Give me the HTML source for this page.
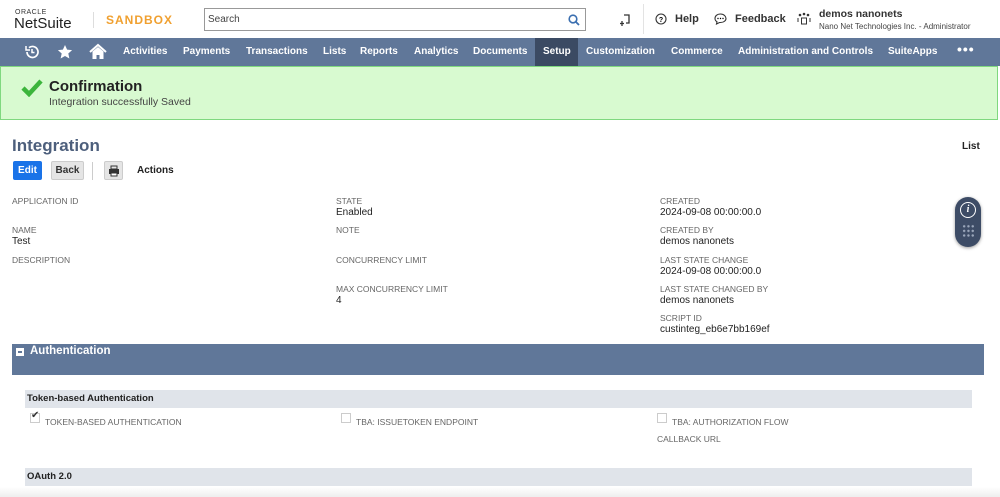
<!DOCTYPE html>
<html><head><style>
*{margin:0;padding:0;box-sizing:border-box}
body{width:1000px;height:497px;overflow:hidden;background:#fff;font-family:"Liberation Sans",sans-serif;color:#333;position:relative}
.a{position:absolute;white-space:nowrap}
.nav{position:absolute;left:0;top:38px;width:1000px;height:28px;background:#607799}
.nav .a{color:#fff;font-size:10px;top:8px;font-weight:bold}
.lbl{font-size:8.5px;color:#666;position:absolute;white-space:nowrap}
.val{font-size:10px;color:#222;position:absolute;white-space:nowrap}
.cb{position:absolute;width:10px;height:10px;border:1px solid #ccc;background:#fff}
</style></head><body>
<div class="a" style="left:15px;top:9px;font-size:7px;letter-spacing:0.5px;color:#333">ORACLE</div>
<div class="a" style="left:14px;top:15px;font-size:15px;color:#222">NetSuite</div>
<div class="a" style="left:93px;top:12px;width:1px;height:16px;background:#ddd"></div>
<div class="a" style="left:106px;top:13px;font-size:12px;font-weight:bold;color:#f0a030;letter-spacing:1px">SANDBOX</div>
<div class="a" style="left:204px;top:8px;width:382px;height:23px;border:1px solid #999;background:#fff"><span style="position:absolute;left:3px;top:5px;font-size:10px;color:#444">Search</span>
<svg style="position:absolute;right:5px;top:5px" width="12" height="12" viewBox="0 0 12 12"><circle cx="5" cy="5" r="3.8" fill="none" stroke="#3b6fb0" stroke-width="1.6"/><path d="M8 8l3 3" stroke="#3b6fb0" stroke-width="1.8"/></svg></div>
<svg class="a" style="left:620px;top:12px" width="13" height="14" viewBox="0 0 13 14"><path d="M4 3h5v8H6M2 9v5M0 11.5h4" stroke="#333" stroke-width="1.3" fill="none"/></svg>
<div class="a" style="left:643px;top:4px;width:1px;height:30px;background:#e3e3e3"></div>
<svg class="a" style="left:655px;top:13px" width="12" height="12"><circle cx="6" cy="6" r="5" fill="none" stroke="#333" stroke-width="1.1"/><text x="6" y="9" font-size="7" text-anchor="middle" font-family="Liberation Sans" font-weight="bold">?</text></svg>
<div class="a" style="left:675px;top:13px;font-size:11px;font-weight:bold;color:#333">Help</div>
<svg class="a" style="left:714px;top:13px" width="13" height="12"><path d="M6.5 1C3 1 1 3 1 5.5c0 1.5.8 2.6 2 3.3L2.5 11l3-1.5h1c3.5 0 5.5-2 5.5-4S10 1 6.5 1z" fill="none" stroke="#333" stroke-width="1.1"/><circle cx="4" cy="5.5" r=".7"/><circle cx="6.5" cy="5.5" r=".7"/><circle cx="9" cy="5.5" r=".7"/></svg>
<div class="a" style="left:735px;top:13px;font-size:11px;font-weight:bold;color:#333">Feedback</div>
<svg class="a" style="left:797px;top:12px" width="14" height="13"><circle cx="3" cy="3" r="1.3" fill="#333"/><circle cx="7" cy="2" r="1.3" fill="#333"/><circle cx="11" cy="3" r="1.3" fill="#333"/><rect x="4.5" y="6" width="5" height="6" fill="none" stroke="#333"/><path d="M1 6v4M13 6v4" stroke="#333"/></svg>
<div class="a" style="left:819px;top:8px;font-size:10.5px;font-weight:bold;color:#333">demos nanonets</div>
<div class="a" style="left:819px;top:22px;font-size:8px;color:#444">Nano Net Technologies Inc. - Administrator</div>

<div class="nav">
<svg class="a" style="left:24px;top:6px" width="16" height="16"><path d="M3 8a5.5 5.5 0 1 0 2-4.3" fill="none" stroke="#fff" stroke-width="1.7"/><path d="M2 2v4h4" fill="none" stroke="#fff" stroke-width="1.5"/><path d="M8 5v3.5h2.5" fill="none" stroke="#fff" stroke-width="1.5"/></svg>
<svg class="a" style="left:57px;top:6px" width="16" height="16"><path d="M8 1l2.1 4.6 5 .5-3.8 3.4 1.1 5L8 12l-4.4 2.5 1.1-5L.9 6.1l5-.5z" fill="#fff"/></svg>
<svg class="a" style="left:89px;top:5px" width="18" height="17"><path d="M1 9L9 2l8 7" fill="none" stroke="#fff" stroke-width="2"/><path d="M3.5 8.5V16h4v-4h3v4h4V8.5L9 4z" fill="#fff"/></svg>
<span class="a" style="left:123px">Activities</span><span class="a" style="left:183px">Payments</span><span class="a" style="left:246px">Transactions</span><span class="a" style="left:323px">Lists</span><span class="a" style="left:360px">Reports</span><span class="a" style="left:414px">Analytics</span><span class="a" style="left:473px">Documents</span>
<div class="a" style="left:535px;top:0;width:43px;height:28px;background:#3b4a63"></div>
<span class="a" style="left:543px">Setup</span><span class="a" style="left:586px">Customization</span><span class="a" style="left:671px">Commerce</span><span class="a" style="left:738px">Administration and Controls</span><span class="a" style="left:888px">SuiteApps</span><span class="a" style="left:957px;top:3px;font-size:14px;letter-spacing:1px">•••</span>
</div>

<div class="a" style="left:0;top:66px;width:998px;height:54px;background:#d8fad0;border:1px solid #7fd87f"></div>
<svg class="a" style="left:21px;top:79px" width="22" height="18"><path d="M2 9l6 6L20 2" fill="none" stroke="#3cb53c" stroke-width="4.5"/></svg>
<div class="a" style="left:49px;top:78px;font-size:15px;font-weight:bold;color:#222">Confirmation</div>
<div class="a" style="left:49px;top:96px;font-size:10.5px;color:#444">Integration successfully Saved</div>

<div class="a" style="left:12px;top:136px;font-size:17px;font-weight:bold;color:#4d5f7c">Integration</div>
<div class="a" style="left:962px;top:141px;font-size:10px;font-weight:bold;color:#222">List</div>
<div class="a" style="left:13px;top:161px;width:29px;height:19px;background:#1a73e8;border-radius:2px;color:#fff;font-size:10px;font-weight:bold;text-align:center;line-height:19px">Edit</div>
<div class="a" style="left:51px;top:161px;width:33px;height:19px;background:#e5e5e5;border:1px solid #ccc;border-radius:2px;font-size:10px;font-weight:bold;text-align:center;line-height:17px">Back</div>
<div class="a" style="left:92px;top:162px;width:1px;height:18px;background:#ccc"></div>
<div class="a" style="left:104px;top:161px;width:19px;height:19px;background:#e5e5e5;border:1px solid #ccc;border-radius:2px"><svg style="position:absolute;left:3px;top:3px" width="12" height="12"><rect x="3" y="1" width="6" height="3" fill="none" stroke="#333"/><rect x="1" y="4" width="10" height="5" fill="#333"/><rect x="3" y="8" width="6" height="3" fill="#fff" stroke="#333"/></svg></div>
<div class="a" style="left:137px;top:165px;font-size:10px;font-weight:bold;color:#222">Actions</div>

<div class="lbl" style="left:12px;top:196px">APPLICATION ID</div>
<div class="lbl" style="left:12px;top:225px">NAME</div><div class="val" style="left:12px;top:236px">Test</div>
<div class="lbl" style="left:12px;top:255px">DESCRIPTION</div>
<div class="lbl" style="left:336px;top:196px">STATE</div><div class="val" style="left:336px;top:207px">Enabled</div>
<div class="lbl" style="left:336px;top:225px">NOTE</div>
<div class="lbl" style="left:336px;top:255px">CONCURRENCY LIMIT</div>
<div class="lbl" style="left:336px;top:284px">MAX CONCURRENCY LIMIT</div><div class="val" style="left:336px;top:295px">4</div>
<div class="lbl" style="left:660px;top:196px">CREATED</div><div class="val" style="left:660px;top:207px">2024-09-08 00:00:00.0</div>
<div class="lbl" style="left:660px;top:225px">CREATED BY</div><div class="val" style="left:660px;top:236px">demos nanonets</div>
<div class="lbl" style="left:660px;top:255px">LAST STATE CHANGE</div><div class="val" style="left:660px;top:266px">2024-09-08 00:00:00.0</div>
<div class="lbl" style="left:660px;top:284px">LAST STATE CHANGED BY</div><div class="val" style="left:660px;top:295px">demos nanonets</div>
<div class="lbl" style="left:660px;top:313px">SCRIPT ID</div><div class="val" style="left:660px;top:324px">custinteg_eb6e7bb169ef</div>

<div class="a" style="left:955px;top:197px;width:26px;height:50px;background:#3d4c66;border-radius:13px;box-shadow:0 1px 3px rgba(0,0,0,.4)">
<div style="position:absolute;left:5px;top:5px;width:16px;height:16px;border:1.5px solid #fff;border-radius:50%;color:#fff;font-size:10px;font-style:italic;font-weight:bold;text-align:center;line-height:13px;font-family:'Liberation Serif',serif">i</div>
<div style="position:absolute;left:7px;top:27px;width:13px;height:14px;background-image:radial-gradient(circle,#9aa6ba 1.1px,transparent 1.3px);background-size:4.3px 4.6px"></div></div>

<div class="a" style="left:12px;top:344px;width:972px;height:31px;background:#607799"></div>
<div class="a" style="left:16px;top:348px;width:8px;height:8px;background:#fff"><div style="position:absolute;left:2px;top:3px;width:4px;height:2px;background:#607799"></div></div>
<div class="a" style="left:30px;top:345px;font-size:11.5px;font-weight:bold;color:#fff">Authentication</div>

<div class="a" style="left:25px;top:390px;width:947px;height:18px;background:#e0e4ea"></div>
<div class="a" style="left:27px;top:393px;font-size:9.5px;font-weight:bold;color:#222">Token-based Authentication</div>
<div class="cb" style="left:30px;top:413px"></div><div class="a" style="left:31px;top:410px;font-size:10px;color:#333">✔</div>
<div class="lbl" style="left:45px;top:417px">TOKEN-BASED AUTHENTICATION</div>
<div class="cb" style="left:341px;top:413px"></div><div class="lbl" style="left:356px;top:417px">TBA: ISSUETOKEN ENDPOINT</div>
<div class="cb" style="left:657px;top:413px"></div><div class="lbl" style="left:672px;top:417px">TBA: AUTHORIZATION FLOW</div>
<div class="lbl" style="left:657px;top:434px">CALLBACK URL</div>

<div class="a" style="left:25px;top:468px;width:947px;height:18px;background:#e0e4ea"></div>
<div class="a" style="left:27px;top:471px;font-size:9.5px;font-weight:bold;color:#222">OAuth 2.0</div>
<div class="a" style="left:0;top:487px;width:1000px;height:10px;background:linear-gradient(#fff,#eee)"></div>
</body></html>
